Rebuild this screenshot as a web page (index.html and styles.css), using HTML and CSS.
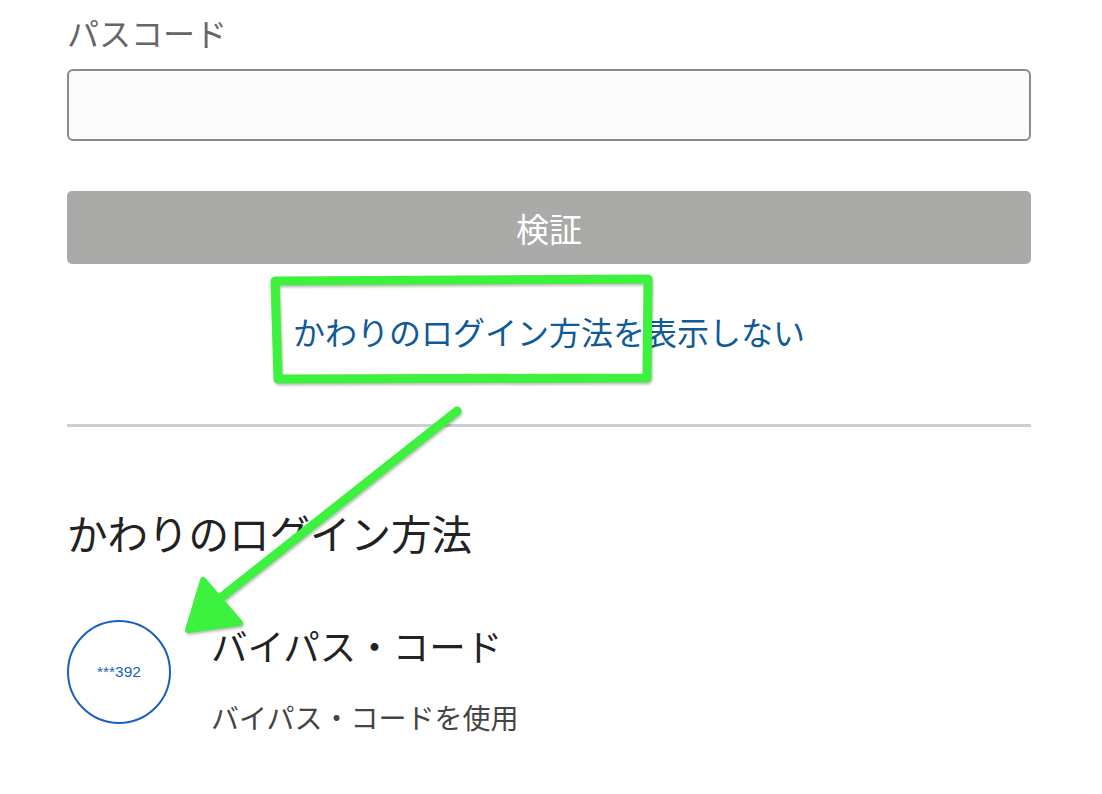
FILE: index.html
```html
<!DOCTYPE html>
<html lang="ja">
<head>
<meta charset="utf-8">
<link rel="stylesheet" href="styles.css">
</head>
<body>
<div class="page">
  <label class="field-label">パスコード</label>
  <div class="input"></div>
  <div class="btn">検証</div>
  <div class="toggle"><a class="link">かわりのログイン方法を表示しない</a></div>
  <hr class="divider">
  <h2 class="heading">かわりのログイン方法</h2>
  <div class="method">
    <div class="badge">***392</div>
    <div class="method-text">
      <div class="method-title">バイパス・コード</div>
      <div class="method-desc">バイパス・コードを使用</div>
    </div>
  </div>
</div>
<svg class="annot" width="1102" height="794" viewBox="0 0 1102 794">
  <g fill="none" stroke="#3cf23f" stroke-width="9" stroke-linejoin="round" stroke-linecap="round">
    <path d="M275 281 L648 279 L647 378 L278 379 Z"/>
    <path d="M457 411 L218 600"/>
  </g>
  <path d="M203 580 L188 630 L240 623 Z" fill="#3cf23f" stroke="#3cf23f" stroke-width="6" stroke-linejoin="round"/>
</svg>
</body>
</html>
```
FILE: styles.css
```css
html, body {
  margin: 0;
  padding: 0;
  background: #ffffff;
}
body {
  font-family: "Noto Sans CJK JP", "Noto Sans", "Liberation Sans", sans-serif;
  position: relative;
  width: 1102px;
  height: 794px;
  overflow: hidden;
}
.page {
  padding: 11px 0 0 67px;
  width: 964px;
  display: flex;
  flex-direction: column;
}
.field-label {
  display: block;
  font-size: 32px;
  line-height: 42px;
  color: #666666;
  margin-bottom: 16px;
}
.input {
  height: 68px;
  border: 2px solid #8a8a8a;
  border-radius: 6px;
  background: #fbfbfb;
}
.btn {
  margin-top: 50px;
  height: 73px;
  background: #aaaaa8;
  border-radius: 5px;
  color: #ffffff;
  font-size: 33px;
  display: flex;
  align-items: center;
  justify-content: center;
}
.toggle {
  margin-top: 45px;
  text-align: center;
  font-size: 32px;
  line-height: 44px;
  height: 44px;
}
.link {
  color: #0f5a98;
}
.divider {
  margin: 71px 0 0 0;
  border: 0;
  height: 3px;
  background: #cbcfd6;
}
.heading {
  margin: 81px 0 0 0;
  font-weight: normal;
  font-size: 40.5px;
  line-height: 50px;
  color: #222222;
}
.method {
  margin-top: 62px;
  display: flex;
  gap: 40px;
  align-items: flex-start;
}
.badge {
  width: 100px;
  height: 100px;
  border: 2px solid #1a5fc2;
  border-radius: 50%;
  display: flex;
  align-items: center;
  justify-content: center;
  font-family: "Liberation Sans", sans-serif;
  font-size: 15.5px;
  color: #1a5fc2;
}
.method-text {
  padding-top: 3px;
  display: flex;
  flex-direction: column;
  gap: 30px;
}
.method-title {
  font-size: 36.5px;
  line-height: 46px;
  color: #222222;
}
.method-desc {
  font-size: 28px;
  line-height: 36px;
  color: #444444;
}
.annot {
  position: absolute;
  left: 0;
  top: 0;
  pointer-events: none;
  filter: drop-shadow(1px 2px 1px rgba(0,0,0,0.25));
}
```
